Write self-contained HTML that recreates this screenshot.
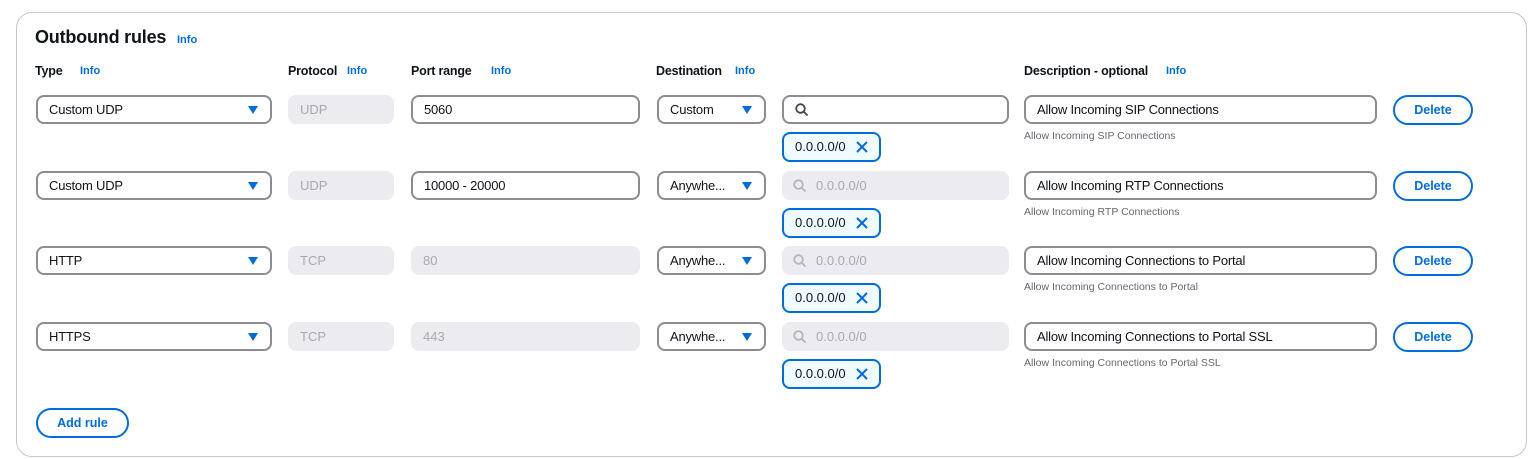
<!DOCTYPE html><html><head><meta charset="utf-8"><style>
*{box-sizing:border-box;margin:0;padding:0}
body{width:1536px;height:459px;background:#fff;font-family:"Liberation Sans",Arial,sans-serif;color:#0f141a;position:relative;overflow:hidden}
.card{position:absolute;left:16px;top:12px;width:1511px;height:445px;border:1px solid #c6c6cd;border-radius:16px}
.a{position:absolute}
.h{left:35px;top:27px;font-size:18px;font-weight:bold;letter-spacing:-0.2px}
.info{color:#006ce0;font-size:11px;font-weight:bold}
.lbl{top:64px;font-size:12.5px;font-weight:bold;letter-spacing:-0.2px}
.in{height:29px;border:2px solid #8c8c94;border-radius:8px;font-size:13px;padding-left:11px;line-height:25px;letter-spacing:-0.2px;background:#fff}
.dis{height:29px;background:#ebebf0;border-radius:8px;font-size:13px;padding-left:12px;line-height:29px;color:#a8a8b0}
.tri{position:absolute;right:12px;top:9px;width:0;height:0;border-left:5px solid transparent;border-right:5px solid transparent;border-top:8px solid #006ce0}
.tok{height:30px;width:99px;border:2px solid #006ce0;border-radius:8px;background:#f0fbff;font-size:13px;padding-left:11px;line-height:26px}
.x{position:absolute;right:9px;top:5px}
.help{font-size:10.5px;color:#656871}
.btn{height:30px;border:2px solid #006ce0;border-radius:16px;color:#006ce0;font-weight:bold;font-size:12.5px;text-align:center;line-height:26px}
.mag{position:absolute;left:11px;top:6px}
.row{position:absolute;left:0;width:1536px;height:70px}
</style></head><body>
<div class="card"></div>
<div class="a h">Outbound rules</div><div class="a info" style="left:177px;top:34px">Info</div>
<div class="a lbl" style="left:35px">Type</div><div class="a info" style="left:80px;top:65px">Info</div>
<div class="a lbl" style="left:288px">Protocol</div><div class="a info" style="left:347px;top:65px">Info</div>
<div class="a lbl" style="left:411px">Port range</div><div class="a info" style="left:491px;top:65px">Info</div>
<div class="a lbl" style="left:656px">Destination</div><div class="a info" style="left:735px;top:65px">Info</div>
<div class="a lbl" style="left:1024px">Description - optional</div><div class="a info" style="left:1166px;top:65px">Info</div>

<div class="row" style="top:95px">
<div class="a in" style="left:36px;width:236px">Custom UDP<span class="tri"></span></div>
<div class="a dis" style="left:288px;width:106px">UDP</div>
<div class="a in" style="left:411px;width:229px">5060</div>
<div class="a in" style="left:657px;width:109px">Custom<span class="tri"></span></div>
<div class="a in" style="left:782px;width:227px"><svg class="mag" width="14" height="14" viewBox="0 0 14 14" fill="none" stroke="#414750" stroke-width="1.8"><circle cx="5.5" cy="5.5" r="4.3"/><path d="M8.7 8.7L12.5 12.5"/></svg></div>
<div class="a tok" style="left:782px;top:37px">0.0.0.0/0<svg class="x" width="16" height="16" viewBox="0 0 16 16" stroke="#006ce0" stroke-width="2"><path d="M3 3L13 13M13 3L3 13"/></svg></div>
<div class="a in" style="left:1024px;width:353px">Allow Incoming SIP Connections</div>
<div class="a help" style="left:1024px;top:35px">Allow Incoming SIP Connections</div>
<div class="a btn" style="left:1393px;width:80px">Delete</div>
</div>
<div class="row" style="top:171px">
<div class="a in" style="left:36px;width:236px">Custom UDP<span class="tri"></span></div>
<div class="a dis" style="left:288px;width:106px">UDP</div>
<div class="a in" style="left:411px;width:229px">10000 - 20000</div>
<div class="a in" style="left:657px;width:109px">Anywhe...<span class="tri"></span></div>
<div class="a dis" style="left:782px;width:227px;padding-left:34px">0.0.0.0/0<svg class="mag" style="left:11px;top:8px" width="14" height="14" viewBox="0 0 14 14" fill="none" stroke="#b4b4bb" stroke-width="1.8"><circle cx="5.5" cy="5.5" r="4.3"/><path d="M8.7 8.7L12.5 12.5"/></svg></div>
<div class="a tok" style="left:782px;top:37px">0.0.0.0/0<svg class="x" width="16" height="16" viewBox="0 0 16 16" stroke="#006ce0" stroke-width="2"><path d="M3 3L13 13M13 3L3 13"/></svg></div>
<div class="a in" style="left:1024px;width:353px">Allow Incoming RTP Connections</div>
<div class="a help" style="left:1024px;top:35px">Allow Incoming RTP Connections</div>
<div class="a btn" style="left:1393px;width:80px">Delete</div>
</div>
<div class="row" style="top:246px">
<div class="a in" style="left:36px;width:236px">HTTP<span class="tri"></span></div>
<div class="a dis" style="left:288px;width:106px">TCP</div>
<div class="a dis" style="left:411px;width:229px">80</div>
<div class="a in" style="left:657px;width:109px">Anywhe...<span class="tri"></span></div>
<div class="a dis" style="left:782px;width:227px;padding-left:34px">0.0.0.0/0<svg class="mag" style="left:11px;top:8px" width="14" height="14" viewBox="0 0 14 14" fill="none" stroke="#b4b4bb" stroke-width="1.8"><circle cx="5.5" cy="5.5" r="4.3"/><path d="M8.7 8.7L12.5 12.5"/></svg></div>
<div class="a tok" style="left:782px;top:37px">0.0.0.0/0<svg class="x" width="16" height="16" viewBox="0 0 16 16" stroke="#006ce0" stroke-width="2"><path d="M3 3L13 13M13 3L3 13"/></svg></div>
<div class="a in" style="left:1024px;width:353px">Allow Incoming Connections to Portal</div>
<div class="a help" style="left:1024px;top:35px">Allow Incoming Connections to Portal</div>
<div class="a btn" style="left:1393px;width:80px">Delete</div>
</div>
<div class="row" style="top:322px">
<div class="a in" style="left:36px;width:236px">HTTPS<span class="tri"></span></div>
<div class="a dis" style="left:288px;width:106px">TCP</div>
<div class="a dis" style="left:411px;width:229px">443</div>
<div class="a in" style="left:657px;width:109px">Anywhe...<span class="tri"></span></div>
<div class="a dis" style="left:782px;width:227px;padding-left:34px">0.0.0.0/0<svg class="mag" style="left:11px;top:8px" width="14" height="14" viewBox="0 0 14 14" fill="none" stroke="#b4b4bb" stroke-width="1.8"><circle cx="5.5" cy="5.5" r="4.3"/><path d="M8.7 8.7L12.5 12.5"/></svg></div>
<div class="a tok" style="left:782px;top:37px">0.0.0.0/0<svg class="x" width="16" height="16" viewBox="0 0 16 16" stroke="#006ce0" stroke-width="2"><path d="M3 3L13 13M13 3L3 13"/></svg></div>
<div class="a in" style="left:1024px;width:353px">Allow Incoming Connections to Portal SSL</div>
<div class="a help" style="left:1024px;top:35px">Allow Incoming Connections to Portal SSL</div>
<div class="a btn" style="left:1393px;width:80px">Delete</div>
</div>

<div class="a btn" style="left:36px;top:408px;width:93px">Add rule</div>
</body></html>
